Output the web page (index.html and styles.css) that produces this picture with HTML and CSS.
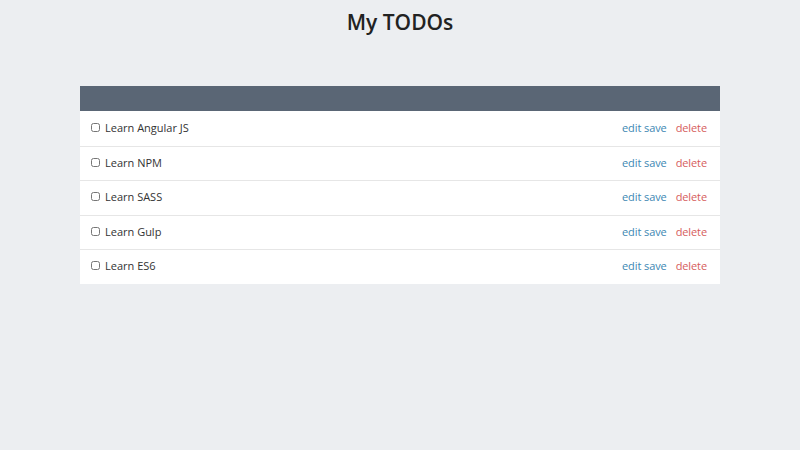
FILE: index.html
```html
<!DOCTYPE html>
<html>
<head>
<meta charset="utf-8">
<link rel="stylesheet" href="styles.css">
</head>
<body>
<h1 class="title">My TODOs</h1>
<div class="table">
  <div class="head"></div>
  <div class="row"><label class="item"><input type="checkbox" class="check"><span>Learn Angular JS</span></label><div class="actions"><a class="edit">edit</a> <a class="edit">save</a><a class="del">delete</a></div></div>
  <div class="row"><label class="item"><input type="checkbox" class="check"><span>Learn NPM</span></label><div class="actions"><a class="edit">edit</a> <a class="edit">save</a><a class="del">delete</a></div></div>
  <div class="row"><label class="item"><input type="checkbox" class="check"><span>Learn SASS</span></label><div class="actions"><a class="edit">edit</a> <a class="edit">save</a><a class="del">delete</a></div></div>
  <div class="row"><label class="item"><input type="checkbox" class="check"><span>Learn Gulp</span></label><div class="actions"><a class="edit">edit</a> <a class="edit">save</a><a class="del">delete</a></div></div>
  <div class="row"><label class="item"><input type="checkbox" class="check"><span>Learn ES6</span></label><div class="actions"><a class="edit">edit</a> <a class="edit">save</a><a class="del">delete</a></div></div>
</div>
</body>
</html>
```
FILE: styles.css
```css
html, body {
  margin: 0;
  padding: 0;
  background: #eceef1;
  font-family: "Open Sans", "Liberation Sans", sans-serif;
  color: #333;
}
.title {
  margin: 0;
  padding-top: 7px;
  height: 86px;
  box-sizing: border-box;
  text-align: center;
  font-size: 21px;
  font-weight: 600;
  color: #222;
  line-height: 30px;
}
.table {
  width: 640px;
  margin: 0 auto;
  background: #fff;
}
.head {
  height: 25px;
  background: #5a6675;
}
.row {
  display: flex;
  align-items: center;
  justify-content: space-between;
  height: 34.5px;
  box-sizing: border-box;
  padding: 0 13px 2px 11px;
  border-top: 1px solid #e6e6e6;
  font-size: 11px;
}
.head + .row { border-top: none; }
.item {
  display: flex;
  align-items: center;
  gap: 5px;
  color: #333;
}
.check {
  width: 9px;
  height: 9px;
  margin: 0;
}
.actions { letter-spacing: -0.1px; }
.actions a { text-decoration: none; }
.edit { color: #3d87b3; }
.del { color: #d65c5c; margin-left: 9px; }
```
